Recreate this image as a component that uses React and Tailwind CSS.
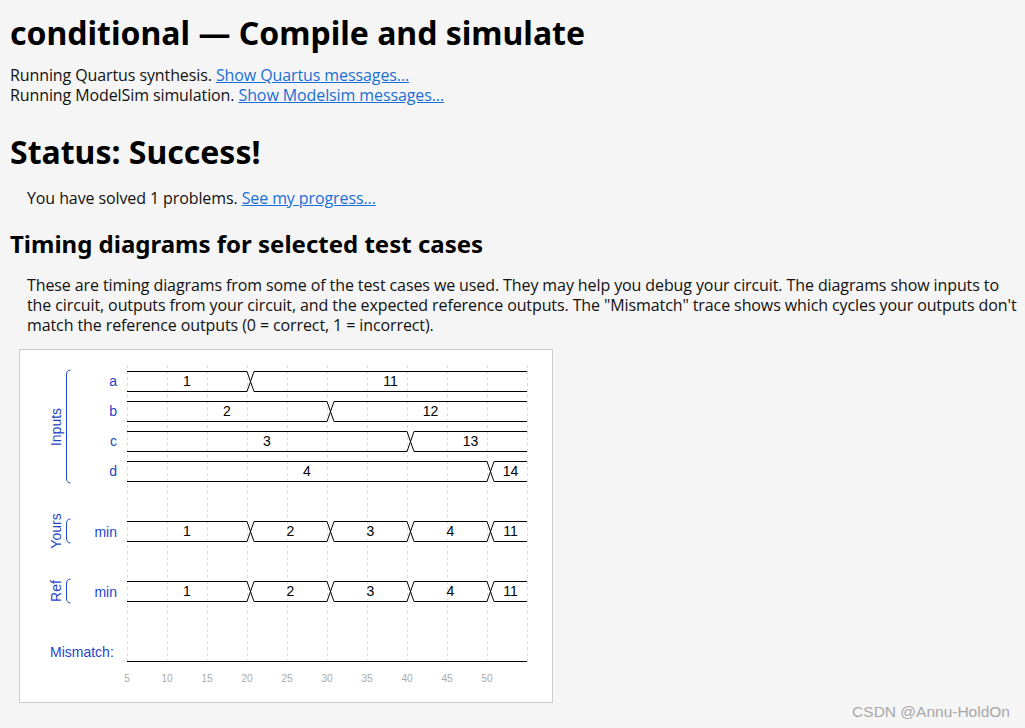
import React from "react";

const BLUE = "#1f45c9";
const X0 = 127;
const X1 = 527;

function Bus({ top, segs }) {
  const bot = top + 20;
  const els = [];
  segs.forEach((s, i) => {
    const a = i === 0 ? s.from : s.from + 7;
    const b = s.to;
    els.push(<line key={"t" + i} x1={a} y1={top + 0.5} x2={b} y2={top + 0.5} stroke="#000" strokeWidth="1" />);
    els.push(<line key={"b" + i} x1={a} y1={bot + 0.5} x2={b} y2={bot + 0.5} stroke="#000" strokeWidth="1" />);
    if (i < segs.length - 1) {
      els.push(<line key={"x1" + i} x1={b} y1={top + 0.5} x2={b + 7} y2={bot + 0.5} stroke="#000" strokeWidth="1" />);
      els.push(<line key={"x2" + i} x1={b} y1={bot + 0.5} x2={b + 7} y2={top + 0.5} stroke="#000" strokeWidth="1" />);
    }
    const cx = (a + b) / 2;
    els.push(
      <text key={"l" + i} x={cx} y={top + 15} textAnchor="middle" fontSize="14" fill="#000" fontFamily="'Liberation Sans', Arial, sans-serif">
        {s.label}
      </text>
    );
  });
  return <g>{els}</g>;
}

function segsFrom(points, labels) {
  const xs = [X0, ...points, X1];
  return labels.map((l, i) => ({ from: xs[i], to: xs[i + 1], label: l }));
}

function Diagram() {
  const grid = [];
  for (let i = 0; i <= 10; i++) {
    const x = X0 + i * 40 + 0.5;
    grid.push(<line key={"g" + i} x1={x} y1={365} x2={x} y2={665} stroke="#dcdcdc" strokeWidth="1" strokeDasharray="3,3" />);
  }
  const ticks = [];
  for (let i = 0; i < 10; i++) {
    ticks.push(
      <text key={"k" + i} x={X0 + i * 40} y={682} textAnchor="middle" fontSize="10" fill="#aaaaaa" fontFamily="'Liberation Sans', Arial, sans-serif">
        {5 + i * 5}
      </text>
    );
  }
  const lab = (txt, y) => (
    <text x={117} y={y} textAnchor="end" fontSize="14" fill={BLUE} fontFamily="'Liberation Sans', Arial, sans-serif">
      {txt}
    </text>
  );
  return (
    <svg width="532" height="352" viewBox="20 350 532 352" className="block">
      {grid}
      <path d="M70.5 370 Q66.5 370 66.5 375 L66.5 478 Q66.5 483 70.5 483" fill="none" stroke={BLUE} strokeWidth="1" />
      <path d="M70.5 519 Q66.5 519 66.5 524 L66.5 538 Q66.5 543 70.5 543" fill="none" stroke={BLUE} strokeWidth="1" />
      <path d="M70.5 579 Q66.5 579 66.5 584 L66.5 598 Q66.5 603 70.5 603" fill="none" stroke={BLUE} strokeWidth="1" />
      <text transform="translate(61 427) rotate(-90)" textAnchor="middle" fontSize="14" fill={BLUE} fontFamily="'Liberation Sans', Arial, sans-serif">Inputs</text>
      <text transform="translate(61 531) rotate(-90)" textAnchor="middle" fontSize="14" fill={BLUE} fontFamily="'Liberation Sans', Arial, sans-serif">Yours</text>
      <text transform="translate(61 591) rotate(-90)" textAnchor="middle" fontSize="14" fill={BLUE} fontFamily="'Liberation Sans', Arial, sans-serif">Ref</text>
      {lab("a", 386)}
      {lab("b", 416)}
      {lab("c", 446)}
      {lab("d", 476)}
      {lab("min", 537)}
      {lab("min", 597)}
      <text x={50} y={657} fontSize="14" fill={BLUE} fontFamily="'Liberation Sans', Arial, sans-serif">Mismatch:</text>
      <Bus top={371} segs={segsFrom([247], ["1", "11"])} />
      <Bus top={401} segs={segsFrom([327], ["2", "12"])} />
      <Bus top={431} segs={segsFrom([407], ["3", "13"])} />
      <Bus top={461} segs={segsFrom([487], ["4", "14"])} />
      <Bus top={521} segs={segsFrom([247, 327, 407, 487], ["1", "2", "3", "4", "11"])} />
      <Bus top={581} segs={segsFrom([247, 327, 407, 487], ["1", "2", "3", "4", "11"])} />
      <line x1={X0} y1={661.5} x2={X1} y2={661.5} stroke="#000" strokeWidth="1" />
      {ticks}
    </svg>
  );
}

export default function App() {
  return (
    <div className="relative min-h-[728px] w-full bg-[#f5f5f5] text-black font-['Open_Sans',sans-serif]">
      <div className="pl-[10px] pt-[13px]">
        <h1 className="text-[32px] leading-[40px] font-bold font-['Noto_Sans',sans-serif]">conditional — Compile and simulate</h1>
        <div className="mt-[12px] text-[16px] leading-[20px] tracking-[-0.1px] text-[#111]">
          <div>
            Running Quartus synthesis. <a href="#" className="text-[#1a6fd6] underline">Show Quartus messages...</a>
          </div>
          <div>
            Running ModelSim simulation. <a href="#" className="text-[#1a6fd6] underline">Show Modelsim messages...</a>
          </div>
        </div>
        <h2 className="mt-[27px] text-[32px] leading-[40px] font-bold font-['Noto_Sans',sans-serif]">Status: Success!</h2>
        <p className="mt-[16px] pl-[17px] text-[16px] leading-[20px] tracking-[-0.1px] text-[#111]">
          You have solved 1 problems. <a href="#" className="text-[#1a6fd6] underline">See my progress...</a>
        </p>
        <h3 className="mt-[21px] text-[24px] leading-[30px] font-bold font-['Noto_Sans',sans-serif]">Timing diagrams for selected test cases</h3>
        <p className="mt-[16px] pl-[17px] text-[16px] leading-[20px] tracking-[-0.1px] whitespace-nowrap text-[#111]">
          These are timing diagrams from some of the test cases we used. They may help you debug your circuit. The diagrams show inputs to
          <br />
          the circuit, outputs from your circuit, and the expected reference outputs. The "Mismatch" trace shows which cycles your outputs don't
          <br />
          match the reference outputs (0 = correct, 1 = incorrect).
        </p>
        <div className="mt-[14px] ml-[9px] w-[534px] h-[354px] border border-[#cccccc] bg-white">
          <Diagram />
        </div>
      </div>
      <div className="absolute right-[15px] top-[702px] text-[15.5px] leading-[20px] text-[#a8a8a8] font-['Liberation_Sans',sans-serif]">CSDN @Annu-HoldOn</div>
    </div>
  );
}
